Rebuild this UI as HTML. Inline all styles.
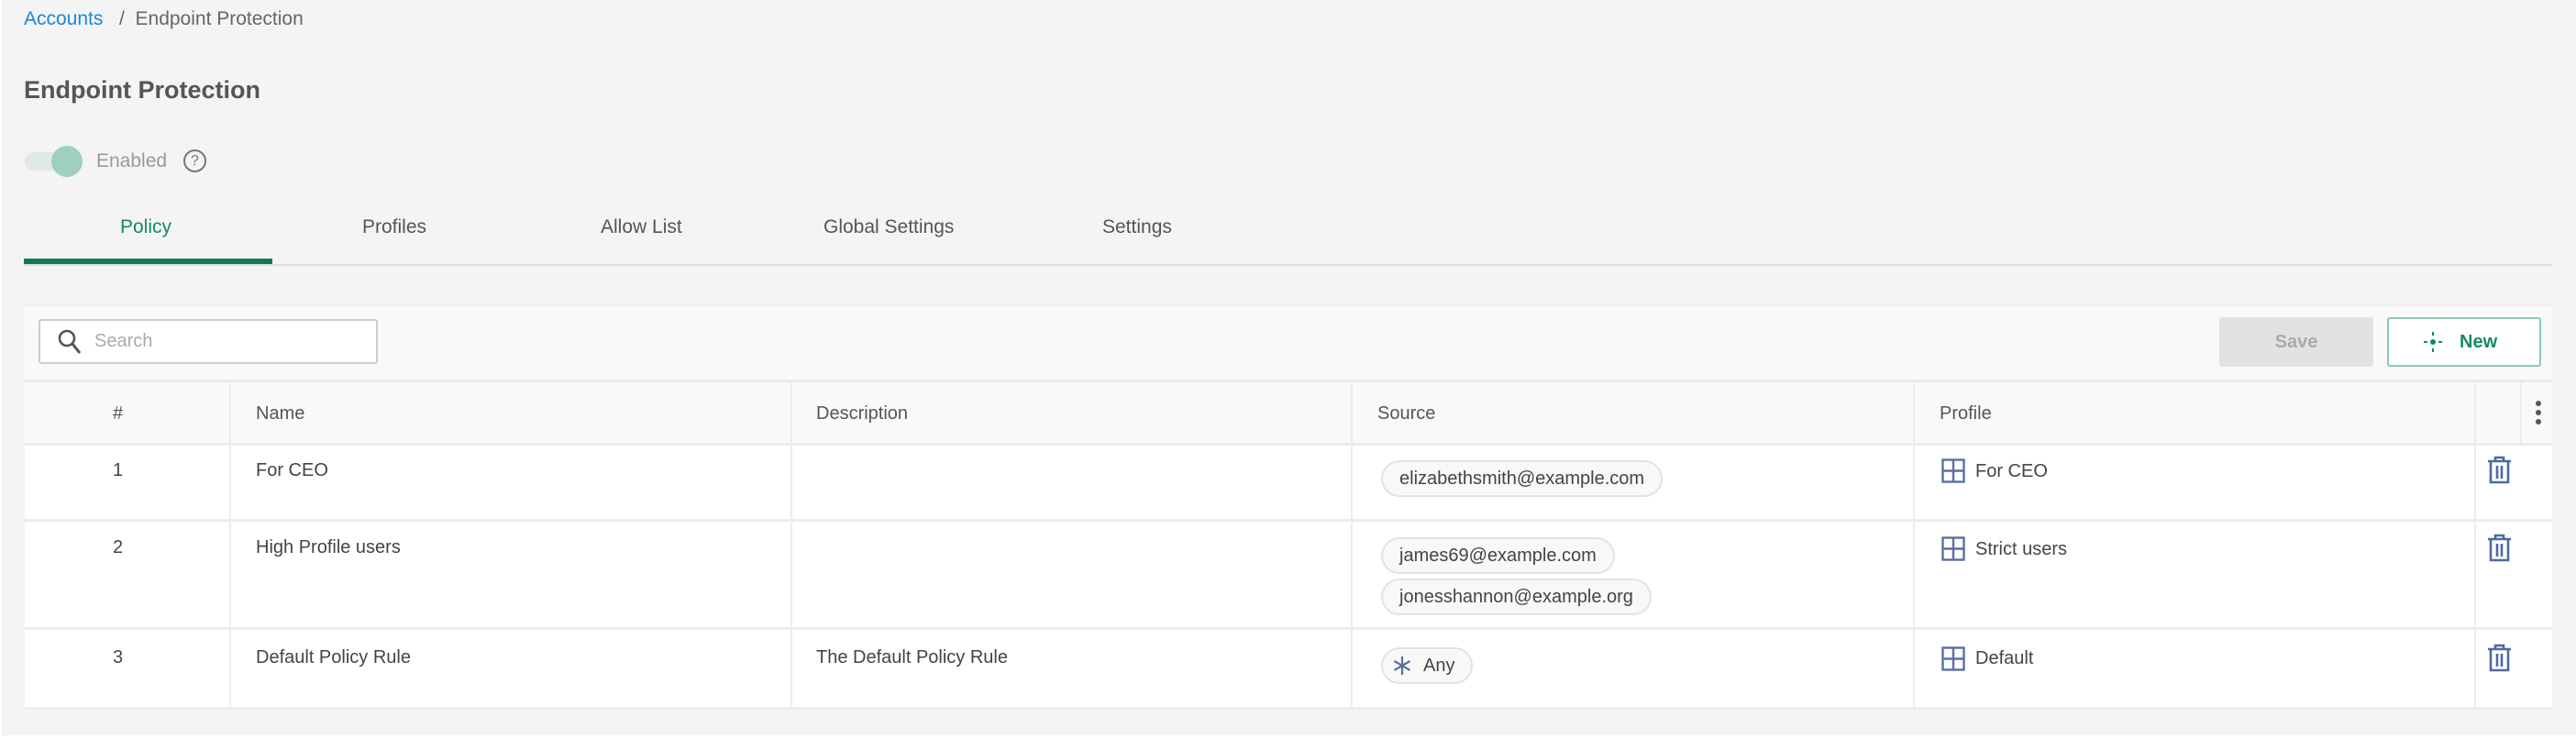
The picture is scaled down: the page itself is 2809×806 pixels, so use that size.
<!DOCTYPE html>
<html><head><meta charset="utf-8"><style>
*{box-sizing:border-box;margin:0;padding:0}
body{width:2809px;height:806px;background:#fff;font-family:"Liberation Sans",sans-serif;color:#444;position:relative;overflow:hidden}
.pg{position:absolute;left:2px;top:0;width:2807px;height:802px;background:#f4f4f4}
.a{position:absolute;white-space:nowrap}
.t{font-size:20px;color:#444}
.chip{position:absolute;height:40px;border:2px solid #e3e3e3;border-radius:20px;background:#f8f8f8;font-size:20px;color:#444;padding:0 18px;line-height:36px}
.vl{position:absolute;width:2px;background:#ececec}
.hl{position:absolute;height:3px;background:#ececec;left:27px;width:2756px}
</style></head><body>
<div class="pg"></div>
<div class="a" style="left:26px;top:9px;font-size:21px;color:#1a86d4">Accounts</div>
<div class="a" style="left:130px;top:9px;font-size:21px;color:#666">/&nbsp;&nbsp;Endpoint Protection</div>
<div class="a" style="left:26px;top:83px;font-size:27px;font-weight:bold;color:#555">Endpoint Protection</div>
<div class="a" style="left:27px;top:166px;width:62px;height:20px;border-radius:10px;background:#dfe9e5"></div>
<div class="a" style="left:56px;top:159px;width:34px;height:34px;border-radius:50%;background:#9fd0bd"></div>
<div class="a" style="left:105px;top:164px;font-size:21px;color:#999">Enabled</div>
<div class="a" style="left:200px;top:163px;width:25px;height:25px;border:2px solid #777;border-radius:50%;font-size:16px;text-align:center;line-height:21px;color:#777">?</div>
<div class="a" style="left:131px;top:236px;font-size:21px;color:#158a5d">Policy</div>
<div class="a" style="left:395px;top:236px;font-size:21px;color:#555">Profiles</div>
<div class="a" style="left:655px;top:236px;font-size:21px;color:#555">Allow List</div>
<div class="a" style="left:898px;top:236px;font-size:21px;color:#555">Global Settings</div>
<div class="a" style="left:1202px;top:236px;font-size:21px;color:#555">Settings</div>
<div class="a" style="left:26px;top:288px;width:2757px;height:2px;background:#ddd"></div>
<div class="a" style="left:26px;top:282px;width:271px;height:6px;background:#117a54"></div>

<div class="a" style="left:27px;top:332px;width:2756px;height:441px;background:#f9f9f9;border-top:2px solid #efefef"></div>
<div class="a" style="left:42px;top:348px;width:370px;height:49px;background:#fff;border:2px solid #ccc;border-radius:3px"></div>
<svg class="a" style="left:62px;top:358px" width="28" height="30" viewBox="0 0 28 30"><circle cx="11" cy="11" r="8" fill="none" stroke="#555" stroke-width="2.6"/><path d="M17 17 L25 27" stroke="#555" stroke-width="3"/></svg>
<div class="a" style="left:103px;top:361px;font-size:20px;color:#aaa">Search</div>
<div class="a" style="left:2420px;top:346px;width:168px;height:54px;background:#e2e2e2;border-radius:3px;font-size:20px;color:#aaa;text-align:center;line-height:54px;font-weight:bold">Save</div>
<div class="a" style="left:2603px;top:346px;width:168px;height:54px;background:#fff;border:2px solid #8bcbb1;border-radius:3px;font-size:20px;color:#158a5d;line-height:50px;font-weight:bold;padding-left:77px">New</div>
<svg class="a" style="left:2640px;top:361px" width="26" height="24" viewBox="0 0 26 24"><g fill="#158a5d"><circle cx="13" cy="12" r="3"/><rect x="12" y="1" width="2" height="4"/><rect x="12" y="19" width="2" height="4"/><rect x="3" y="11" width="4" height="2"/><rect x="19" y="11" width="4" height="2"/></g></svg>

<div class="a" style="left:27px;top:417px;width:2756px;height:66px;background:#f9f9f9"></div>
<div class="a" style="left:27px;top:485px;width:2756px;height:288px;background:#fff"></div>
<div class="hl" style="top:414px"></div>
<div class="hl" style="top:483px"></div>
<div class="hl" style="top:566px"></div>
<div class="hl" style="top:684px"></div>
<div class="hl" style="top:771px"></div>
<div class="vl" style="left:250px;top:417px;height:355px"></div>
<div class="vl" style="left:862px;top:417px;height:355px"></div>
<div class="vl" style="left:1473px;top:417px;height:355px"></div>
<div class="vl" style="left:2086px;top:417px;height:355px"></div>
<div class="vl" style="left:2698px;top:417px;height:355px"></div>
<div class="vl" style="left:2748px;top:417px;height:66px"></div>
<svg class="a" style="left:2762px;top:436px" width="12" height="30"><g fill="#555"><circle cx="6" cy="4" r="3"/><circle cx="6" cy="14" r="3"/><circle cx="6" cy="24" r="3"/></g></svg>

<div class="a t" style="left:123px;top:440px;color:#555">#</div>
<div class="a t" style="left:279px;top:440px;color:#555">Name</div>
<div class="a t" style="left:890px;top:440px;color:#555">Description</div>
<div class="a t" style="left:1502px;top:440px;color:#555">Source</div>
<div class="a t" style="left:2115px;top:440px;color:#555">Profile</div>

<div class="a t" style="left:123px;top:502px">1</div>
<div class="a t" style="left:279px;top:502px">For CEO</div>
<div class="chip" style="left:1506px;top:502px">elizabethsmith@example.com</div>
<div class="a t" style="left:2154px;top:503px">For CEO</div>

<div class="a t" style="left:123px;top:586px">2</div>
<div class="a t" style="left:279px;top:586px">High Profile users</div>
<div class="chip" style="left:1506px;top:586px">james69@example.com</div>
<div class="chip" style="left:1506px;top:631px">jonesshannon@example.org</div>
<div class="a t" style="left:2154px;top:588px">Strict users</div>

<div class="a t" style="left:123px;top:706px">3</div>
<div class="a t" style="left:279px;top:706px">Default Policy Rule</div>
<div class="a t" style="left:890px;top:706px">The Default Policy Rule</div>
<div class="chip" style="left:1506px;top:706px;padding-left:44px">Any</div>
<svg class="a" style="left:1519px;top:715px" width="20" height="22" viewBox="0 0 20 22"><g stroke="#5a6f9e" stroke-width="2.2"><path d="M10 1V21M1.5 6L18.5 16M18.5 6L1.5 16"/></g></svg>
<div class="a t" style="left:2154px;top:707px">Default</div>

<svg class="a" style="left:2117px;top:500px" width="26" height="27" viewBox="0 0 26 27"><g fill="none" stroke="#5a70a3" stroke-width="2.4"><rect x="1.5" y="1.5" width="23" height="24"/><path d="M13 1.5V25.5M1.5 13.5H24.5"/></g></svg>
<svg class="a" style="left:2117px;top:585px" width="26" height="27" viewBox="0 0 26 27"><g fill="none" stroke="#5a70a3" stroke-width="2.4"><rect x="1.5" y="1.5" width="23" height="24"/><path d="M13 1.5V25.5M1.5 13.5H24.5"/></g></svg>
<svg class="a" style="left:2117px;top:705px" width="26" height="27" viewBox="0 0 26 27"><g fill="none" stroke="#5a70a3" stroke-width="2.4"><rect x="1.5" y="1.5" width="23" height="24"/><path d="M13 1.5V25.5M1.5 13.5H24.5"/></g></svg>

<svg class="a" style="left:2712px;top:497px" width="27" height="31" viewBox="0 0 27 31"><g fill="none" stroke="#4e6aa0" stroke-width="2.6"><path d="M1 6H26M9 6V2H18V6M4 6V29H23V6M11 11V25M16 11V25"/></g></svg>
<svg class="a" style="left:2712px;top:582px" width="27" height="31" viewBox="0 0 27 31"><g fill="none" stroke="#4e6aa0" stroke-width="2.6"><path d="M1 6H26M9 6V2H18V6M4 6V29H23V6M11 11V25M16 11V25"/></g></svg>
<svg class="a" style="left:2712px;top:702px" width="27" height="31" viewBox="0 0 27 31"><g fill="none" stroke="#4e6aa0" stroke-width="2.6"><path d="M1 6H26M9 6V2H18V6M4 6V29H23V6M11 11V25M16 11V25"/></g></svg>
</body></html>
